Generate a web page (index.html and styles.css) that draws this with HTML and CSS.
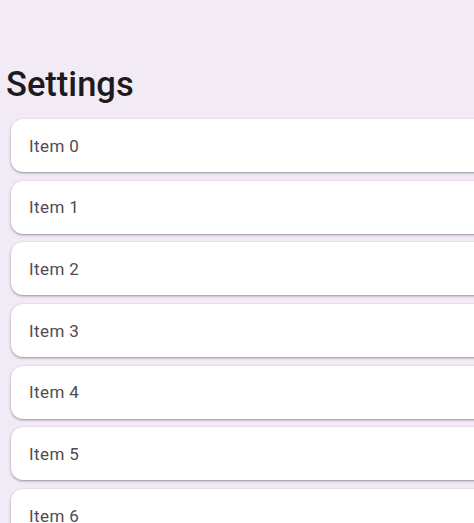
FILE: index.html
```
<!DOCTYPE html>
<html>
<head>
<meta charset="utf-8">
<link rel="stylesheet" href="styles.css">
</head>
<body>
<div class="page">
  <h1 class="title">Settings</h1>
  <div class="list">
    <div class="card">Item 0</div>
    <div class="card">Item 1</div>
    <div class="card">Item 2</div>
    <div class="card">Item 3</div>
    <div class="card">Item 4</div>
    <div class="card">Item 5</div>
    <div class="card">Item 6</div>
  </div>
</div>
</body>
</html>
```
FILE: styles.css
```
html, body {
  margin: 0;
  padding: 0;
  background: #f2ebf6;
  overflow: hidden;
  height: 100%;
}
.page {
  font-family: Roboto, "Liberation Sans", sans-serif;
  padding-top: 62px;
}
.title {
  margin: 0 0 0 6px;
  font-size: 34.5px;
  font-weight: 500;
  line-height: 44px;
  color: #1d1b20;
  letter-spacing: 0;
}
.list {
  display: flex;
  flex-direction: column;
  gap: 8.7px;
  margin-top: 13px;
  margin-left: 11px;
  margin-right: -20px;
}
.card {
  background: #ffffff;
  border-radius: 12px;
  height: 53px;
  display: flex;
  align-items: center;
  padding-left: 18px;
  font-size: 17px;
  letter-spacing: 0.4px;
  color: #4f4b55;
  box-shadow: 0 1px 2px rgba(0,0,0,0.3), 0 1px 3px 1px rgba(0,0,0,0.08);
  flex-shrink: 0;
}
```
